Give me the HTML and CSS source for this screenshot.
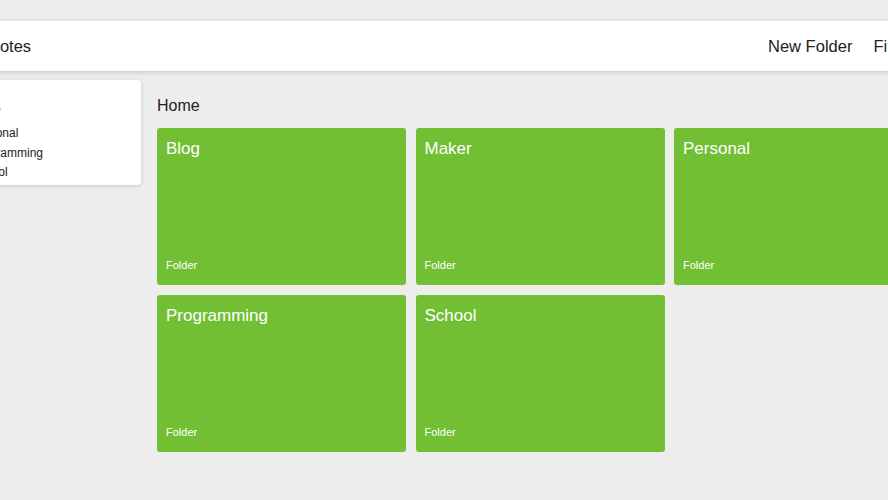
FILE: index.html
```html
<!DOCTYPE html>
<html lang="en">
<head>
<meta charset="utf-8">
<title>Notes</title>
<link rel="stylesheet" href="styles.css">
</head>
<body>
<div class="page">
  <header class="topbar">
    <div class="brand">Notes</div>
    <nav class="actions">
      <a class="action">New Folder</a>
      <a class="action">File</a>
    </nav>
  </header>
  <div class="content">
    <aside class="sidebar">
      <div class="side-title">Home</div>
      <ul class="side-list">
        <li>Personal</li>
        <li>Programming</li>
        <li>School</li>
      </ul>
    </aside>
    <main class="main">
      <h1 class="crumb">Home</h1>
      <div class="grid">
        <div class="card"><div class="card-title">Blog</div><div class="card-type">Folder</div></div>
        <div class="card"><div class="card-title">Maker</div><div class="card-type">Folder</div></div>
        <div class="card"><div class="card-title">Personal</div><div class="card-type">Folder</div></div>
        <div class="card"><div class="card-title">Programming</div><div class="card-type">Folder</div></div>
        <div class="card"><div class="card-title">School</div><div class="card-type">Folder</div></div>
      </div>
    </main>
  </div>
</div>
</body>
</html>
```
FILE: styles.css
```css
html, body {
  margin: 0;
  padding: 0;
  background: #ededed;
  overflow: hidden;
  font-family: "Liberation Sans", Arial, sans-serif;
  color: #222;
}
.page {
  width: 1000px;
  margin-left: -40px;
  padding-top: 21px;
}
.topbar {
  height: 50px;
  background: #fff;
  box-shadow: 0 1px 5px rgba(0,0,0,0.18);
  display: flex;
  align-items: center;
  justify-content: space-between;
  padding: 0 60px 0 28px;
  box-sizing: border-box;
  font-size: 16.5px;
  position: relative;
  z-index: 1;
}
.brand { color: #222; }
.actions {
  display: flex;
  gap: 21px;
}
.action { color: #222; cursor: pointer; white-space: nowrap; }
.content {
  display: flex;
  align-items: flex-start;
  margin-top: 9px;
}
.sidebar {
  width: 181px;
  height: 105px;
  box-sizing: border-box;
  background: #fff;
  border-radius: 4px;
  box-shadow: 0 1px 4px rgba(0,0,0,0.15);
  padding: 21px 0 0 6px;
}
.side-title {
  font-size: 13px;
  line-height: 16px;
}
.side-list {
  list-style: none;
  margin: 7px 0 0 0;
  padding: 0 0 0 5px;
  font-size: 12px;
  line-height: 19.5px;
}
.main {
  margin-left: 16px;
  padding-top: 16px;
}
.crumb {
  margin: 0;
  font-size: 16px;
  font-weight: normal;
  line-height: 20px;
  color: #222;
}
.grid {
  margin-top: 12px;
  display: grid;
  grid-template-columns: repeat(3, 249px);
  grid-auto-rows: 157px;
  column-gap: 9.5px;
  row-gap: 10px;
}
.card {
  background: #72bf33;
  border-radius: 3px;
  color: #fff;
  display: flex;
  flex-direction: column;
  justify-content: space-between;
  padding: 11px 9px 13px 9px;
}
.card-title {
  font-size: 17px;
  line-height: 20px;
}
.card-type {
  font-size: 11px;
  line-height: 14px;
}
```
